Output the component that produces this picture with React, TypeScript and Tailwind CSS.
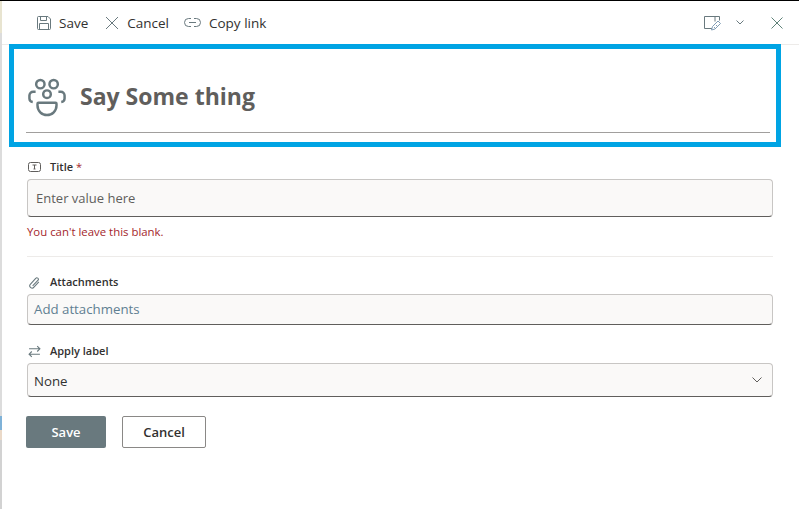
import React from "react";

const ToolBtn = ({ icon, label, className }: { icon: React.ReactNode; label: string; className?: string }) => (
  <div className={`flex items-center ${className ?? ""}`}>
    {icon}
    <span className="ml-[8px] text-[13.5px] leading-[20px] text-[#323130]">{label}</span>
  </div>
);

const Label = ({ icon, children }: { icon: React.ReactNode; children: React.ReactNode }) => (
  <div className="flex items-center h-[20px]">
    <span className="w-[22px] ml-[1px] flex items-center">{icon}</span>
    <span className="text-[11px] font-semibold leading-[16px] text-[#323130]">{children}</span>
  </div>
);

export default function App() {
  return (
    <div className="relative w-[799px] h-[509px] bg-white overflow-hidden" style={{ fontFamily: '"Open Sans", "Noto Sans", sans-serif' }}>
      <div className="h-[1px] bg-black" />
      <div className="flex h-[508px]">
        <div className="w-[2px] bg-[#d2d2d2] shrink-0 flex flex-col">
          <div className="h-[32px] bg-[#e8e4d0]" />
          <div className="h-[383px] bg-[#dcdcdc]" />
          <div className="h-[14px] bg-[#7fb2d8]" />
          <div className="h-[10px] bg-[#ead9c8]" />
          <div className="flex-1 bg-[#d2d2d2]" />
        </div>
        <div className="flex-1 min-w-0 flex flex-col">
          <div className="h-[44px] flex items-center pl-[34px] pr-[16px] border-b border-[#edebe9] relative">
            <ToolBtn
              className="mr-[17px] [&>span]:ml-[7px]"
              label="Save"
              icon={
                <svg width="16" height="16" viewBox="0 0 16 16" fill="none" stroke="#69797e" strokeWidth="1">
                  <path d="M1.5 2.5a1 1 0 0 1 1-1h9.5l2.5 2.5v9.5a1 1 0 0 1-1 1h-11a1 1 0 0 1-1-1z" />
                  <path d="M4.5 1.5v4h6v-4M3.5 14.5v-6h9v6" />
                </svg>
              }
            />
            <ToolBtn
              className="mr-[15px]"
              label="Cancel"
              icon={
                <svg width="14" height="14" viewBox="0 0 14 14" fill="none" stroke="#69797e" strokeWidth="1">
                  <path d="M1 1l12 12M13 1L1 13" />
                </svg>
              }
            />
            <ToolBtn
              label="Copy link"
              icon={
                <svg width="17" height="10" viewBox="0 0 17 10" fill="none" stroke="#69797e" strokeWidth="1">
                  <path d="M7 .5H4.5a4 4 0 0 0 0 8H7M10 .5h2.5a4 4 0 0 1 0 8H10M5 4.5h7" />
                </svg>
              }
            />
            <div className="ml-auto flex items-center">
              <svg width="17" height="16" viewBox="0 0 17 16" fill="none" className="mr-[15px]">
                <path d="M8 13.5H.5v-12h15v4" stroke="#69797e" />
                <path d="M11 1.5v5" stroke="#69797e" />
                <path d="M7.5 15l1-3.5 5.5-5.5 2.5 2.5-5.5 5.5z" stroke="#7f9cb5" />
                <path d="M10 12l2 2M12 10l1.5 1.5" stroke="#7f9cb5" />
              </svg>
              <svg width="8" height="5" viewBox="0 0 8 5" fill="none" stroke="#69797e" className="mr-[27px]">
                <path d="M.5.5L4 4 7.5.5" />
              </svg>
              <svg width="12" height="12" viewBox="0 0 12 12" fill="none" stroke="#5f8278" strokeWidth="1">
                <path d="M.5.5l11 11M11.5.5l-11 11" />
              </svg>
            </div>
          </div>
          <div className="relative z-10 -mt-[1px] ml-[7px] w-[772px] h-[103px] border-[5px] border-[#00a4e4] bg-white">
            <div className="flex items-center h-[83px] pl-[14px] pt-[13px]">
              <svg width="38" height="39" viewBox="0 0 40 40" fill="none" stroke="#69797e" strokeWidth="2.6" className="mr-[14px]">
                <circle cx="13" cy="6" r="4.4" />
                <circle cx="27" cy="6" r="4.4" />
                <circle cx="20" cy="16.5" r="4" />
                <path d="M8 14H5.5a4 4 0 0 0-4 4v3a4 4 0 0 0 3.5 3.8" />
                <path d="M32 14h2.5a4 4 0 0 1 4 4v3a4 4 0 0 1-3.5 3.8" />
                <path d="M11 25.5h18a1 1 0 0 1 1 1v2a10 10 0 0 1-20 0v-2a1 1 0 0 1 1-1z" />
              </svg>
              <span className="text-[23px] font-bold leading-[32px] pb-[2px] text-[#605e5c]">Say Some thing</span>
            </div>
            <div className="ml-[12px] w-[744px] h-[1px] bg-[#a19f9d]" />
          </div>
          <div className="pl-[25px] pr-[26px] pt-[10px]">
            <Label
              icon={
                <svg width="14" height="10" viewBox="0 0 14 10" fill="none" stroke="#605e5c">
                  <rect x=".5" y=".5" width="12" height="9" rx="2" />
                  <path d="M4.5 3h4M6.5 3v4M5.5 7h2" />
                </svg>
              }
            >
              Title <span className="text-[#a4262c] font-normal">*</span>
            </Label>
            <div className="mt-[2px] h-[38px] rounded-[4px] border border-[#c8c6c4] border-b-[#605e5c] bg-[#faf9f8] flex items-center pl-[8px] pt-[1px] text-[13px] text-[#605e5c]">
              Enter value here
            </div>
            <div className="mt-[7px] text-[11.4px] leading-[16px] text-[#a4262c]">You can't leave this blank.</div>
            <div className="mt-[16px] h-[1px] bg-[#edebe9]" />
            <div className="mt-[15px]">
              <Label
                icon={
                  <svg width="13" height="13" viewBox="0 0 12 12" fill="none" stroke="#69797e">
                    <path d="M10.5 5L6 9.8a2 2 0 0 1-3.4-2.6L7.6 1.8a1.3 1.3 0 0 1 2.2 1.6L4.8 8.6" transform="translate(-.5 .5)" />
                  </svg>
                }
              >
                Attachments
              </Label>
            </div>
            <div className="mt-[2px] h-[31px] rounded-[4px] border border-[#c8c6c4] border-b-[#605e5c] bg-[#faf9f8] flex items-center pl-[6px] text-[13.25px] text-[#5f7f92]">
              Add attachments
            </div>
            <div className="mt-[16px]">
              <Label
                icon={
                  <svg width="13" height="13" viewBox="0 0 12 12" fill="none" stroke="#69797e">
                    <path d="M1 3.5h10M8.5 1L11 3.5 8.5 6M11 8.5H1M3.5 6L1 8.5 3.5 11" />
                  </svg>
                }
              >
                Apply label
              </Label>
            </div>
            <div className="mt-[2px] h-[34px] rounded-[4px] border border-[#c8c6c4] border-b-[#605e5c] bg-[#faf9f8] flex items-center justify-between pl-[6px] pr-[10px] text-[13.25px] text-[#323130]">
              <span className="pt-[3px]">None</span>
              <svg width="10" height="6" viewBox="0 0 10 6" fill="none" stroke="#605e5c">
                <path d="M.5.5L5 5 9.5.5" />
              </svg>
            </div>
            <div className="flex mt-[19px] gap-[16px] -ml-[1px]">
              <div className="w-[80px] h-[32px] rounded-[2px] bg-[#69797e] flex items-center justify-center pt-[1px] text-[13px] font-semibold text-white">Save</div>
              <div className="w-[84px] h-[32px] rounded-[2px] border border-[#8a8886] bg-white flex items-center justify-center pt-[1px] text-[13px] font-semibold text-[#323130]">Cancel</div>
            </div>
          </div>
        </div>
      </div>
    </div>
  );
}
